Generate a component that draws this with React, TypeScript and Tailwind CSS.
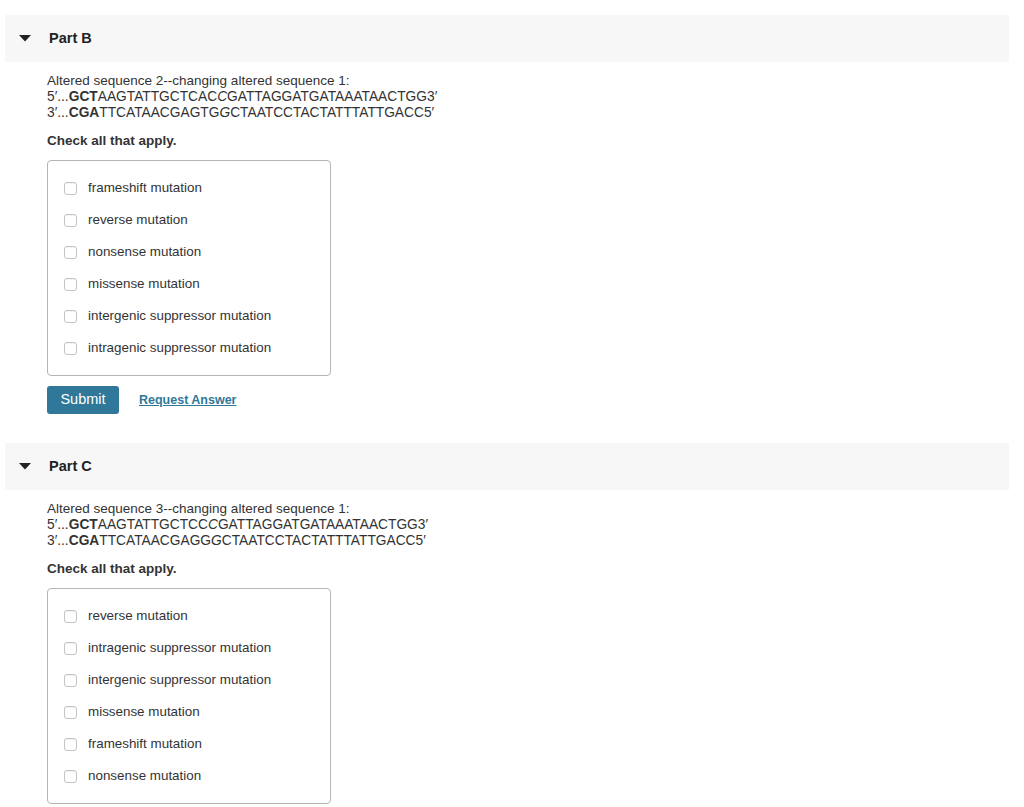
import React from 'react'

type Seq = { label: string; top: [string, string, string]; bottom: [string, string, string] }

const parts: { title: string; seq: Seq; options: string[]; submit: boolean }[] = [
  {
    title: 'Part B',
    seq: {
      label: 'Altered sequence 2--changing altered sequence 1:',
      top: ['GCTAAGTATTGCTCAC', 'C', 'GATTAGGATGATAAATAACTGG3′'],
      bottom: ['CGATTCATAACGAGTG', 'G', 'CTAATCCTACTATTTATTGACC5′'],
    },
    options: [
      'frameshift mutation',
      'reverse mutation',
      'nonsense mutation',
      'missense mutation',
      'intergenic suppressor mutation',
      'intragenic suppressor mutation',
    ],
    submit: true,
  },
  {
    title: 'Part C',
    seq: {
      label: 'Altered sequence 3--changing altered sequence 1:',
      top: ['GCTAAGTATTGCTCC', 'C', 'GATTAGGATGATAAATAACTGG3′'],
      bottom: ['CGATTCATAACGAGG', 'G', 'CTAATCCTACTATTTATTGACC5′'],
    },
    options: [
      'reverse mutation',
      'intragenic suppressor mutation',
      'intergenic suppressor mutation',
      'missense mutation',
      'frameshift mutation',
      'nonsense mutation',
    ],
    submit: false,
  },
]

function SeqLine({ prefix, parts }: { prefix: string; parts: [string, string, string] }) {
  const bold = parts[0].slice(0, 3)
  const rest = parts[0].slice(3)
  return (
    <div className="text-[13.75px]">
      {prefix}...<b>{bold}</b>{rest}<i>{parts[1]}</i>{parts[2]}
    </div>
  )
}

function Part({ title, seq, options, submit }: (typeof parts)[number]) {
  return (
    <section>
      <div className="flex items-center h-[47px] bg-[#f7f7f7] ml-[5px] mr-[15px]">
        <svg width="12" height="7" viewBox="0 0 12 7" className="ml-[14px]">
          <path d="M0 0h12L6 6.5z" fill="#222" />
        </svg>
        <span className="ml-[18px] pt-[1px] font-bold text-[14.5px] text-[#222]">{title}</span>
      </div>
      <div className="pl-[47px] pt-[11px]">
        <div className="text-[13.5px] leading-[16px] text-[#333]">
          <div>{seq.label}</div>
          <SeqLine prefix="5′" parts={seq.top} />
          <SeqLine prefix="3′" parts={seq.bottom} />
        </div>
        <p className="mt-[12px] text-[13.5px] leading-[16px] font-bold text-[#333]">Check all that apply.</p>
        <div className="mt-[11px] w-[284px] border border-[#b5b5b5] rounded-[4px] py-[11px]">
          {options.map(o => (
            <label key={o} className="flex items-center h-[32px] pl-[16px]">
              <span className="w-[13px] h-[13px] rounded-[3px] border border-[#c4c4c4] bg-white shadow-[inset_0_1px_1px_rgba(0,0,0,0.06)]" />
              <span className="ml-[11px] text-[13.4px] text-[#333]">{o}</span>
            </label>
          ))}
        </div>
        {submit && (
          <div className="flex items-center mt-[10px]">
            <button className="h-[28px] w-[72px] rounded-[3px] bg-[#2f7899] text-white text-[14.5px]">Submit</button>
            <a className="ml-[20px] text-[12.5px] font-bold text-[#2f7899] underline">Request Answer</a>
          </div>
        )}
      </div>
    </section>
  )
}

export default function App() {
  return (
    <div className="w-[1024px] h-[807px] overflow-hidden bg-white pt-[15px] font-['Liberation_Sans',Arial,sans-serif]">
      <Part {...parts[0]} />
      <div className="h-[29px]" />
      <Part {...parts[1]} />
    </div>
  )
}
